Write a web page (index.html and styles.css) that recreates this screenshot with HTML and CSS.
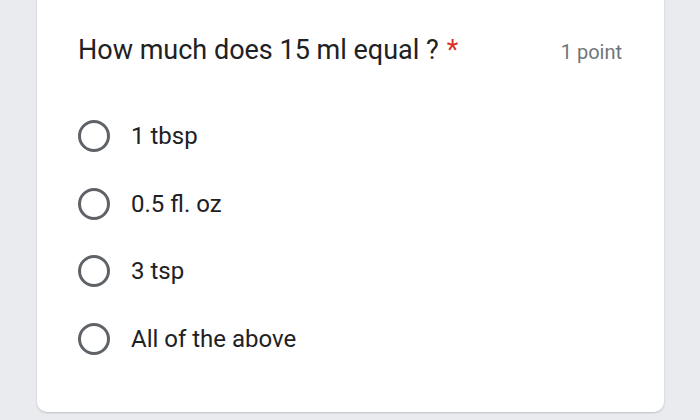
FILE: index.html
```html
<!DOCTYPE html>
<html>
<head>
<meta charset="utf-8">
<link rel="stylesheet" href="styles.css">
</head>
<body>
<div class="page">
  <div class="card">
    <div class="header">
      <div class="title">How much does 15 ml equal ?<span class="req">*</span></div>
      <div class="points">1 point</div>
    </div>
    <div class="options">
      <div class="option"><span class="radio"></span><span class="label">1 tbsp</span></div>
      <div class="option"><span class="radio"></span><span class="label">0.5 fl. oz</span></div>
      <div class="option"><span class="radio"></span><span class="label">3 tsp</span></div>
      <div class="option"><span class="radio"></span><span class="label">All of the above</span></div>
    </div>
  </div>
</div>
</body>
</html>
```
FILE: styles.css
```css
html, body {
  margin: 0;
  padding: 0;
  height: 420px;
  overflow: hidden;
  background: #e9ebef;
  font-family: Roboto, "Liberation Sans", sans-serif;
}
.page {
  padding: 0 36px 0 37px;
}
.card {
  background: #fff;
  margin-top: -20px;
  height: 432px;
  box-sizing: border-box;
  border-radius: 0 0 10px 10px;
  box-shadow: 0 1px 2px rgba(60,64,67,0.25);
  padding: 54px 42px 0 41px;
}
.header {
  display: flex;
  justify-content: space-between;
  align-items: baseline;
}
.title {
  font-size: 27px;
  color: #202124;
}
.req {
  color: #d93025;
  margin-left: 8px;
}
.points {
  font-size: 20px;
  color: #70757a;
}
.options {
  display: flex;
  flex-direction: column;
  margin-top: 36px;
}
.option {
  display: flex;
  align-items: center;
  height: 67.7px;
}
.radio {
  width: 26px;
  height: 26px;
  border: 3px solid #5f6368;
  border-radius: 50%;
  flex: none;
}
.label {
  margin-left: 21px;
  font-size: 24px;
  color: #202124;
}
```
